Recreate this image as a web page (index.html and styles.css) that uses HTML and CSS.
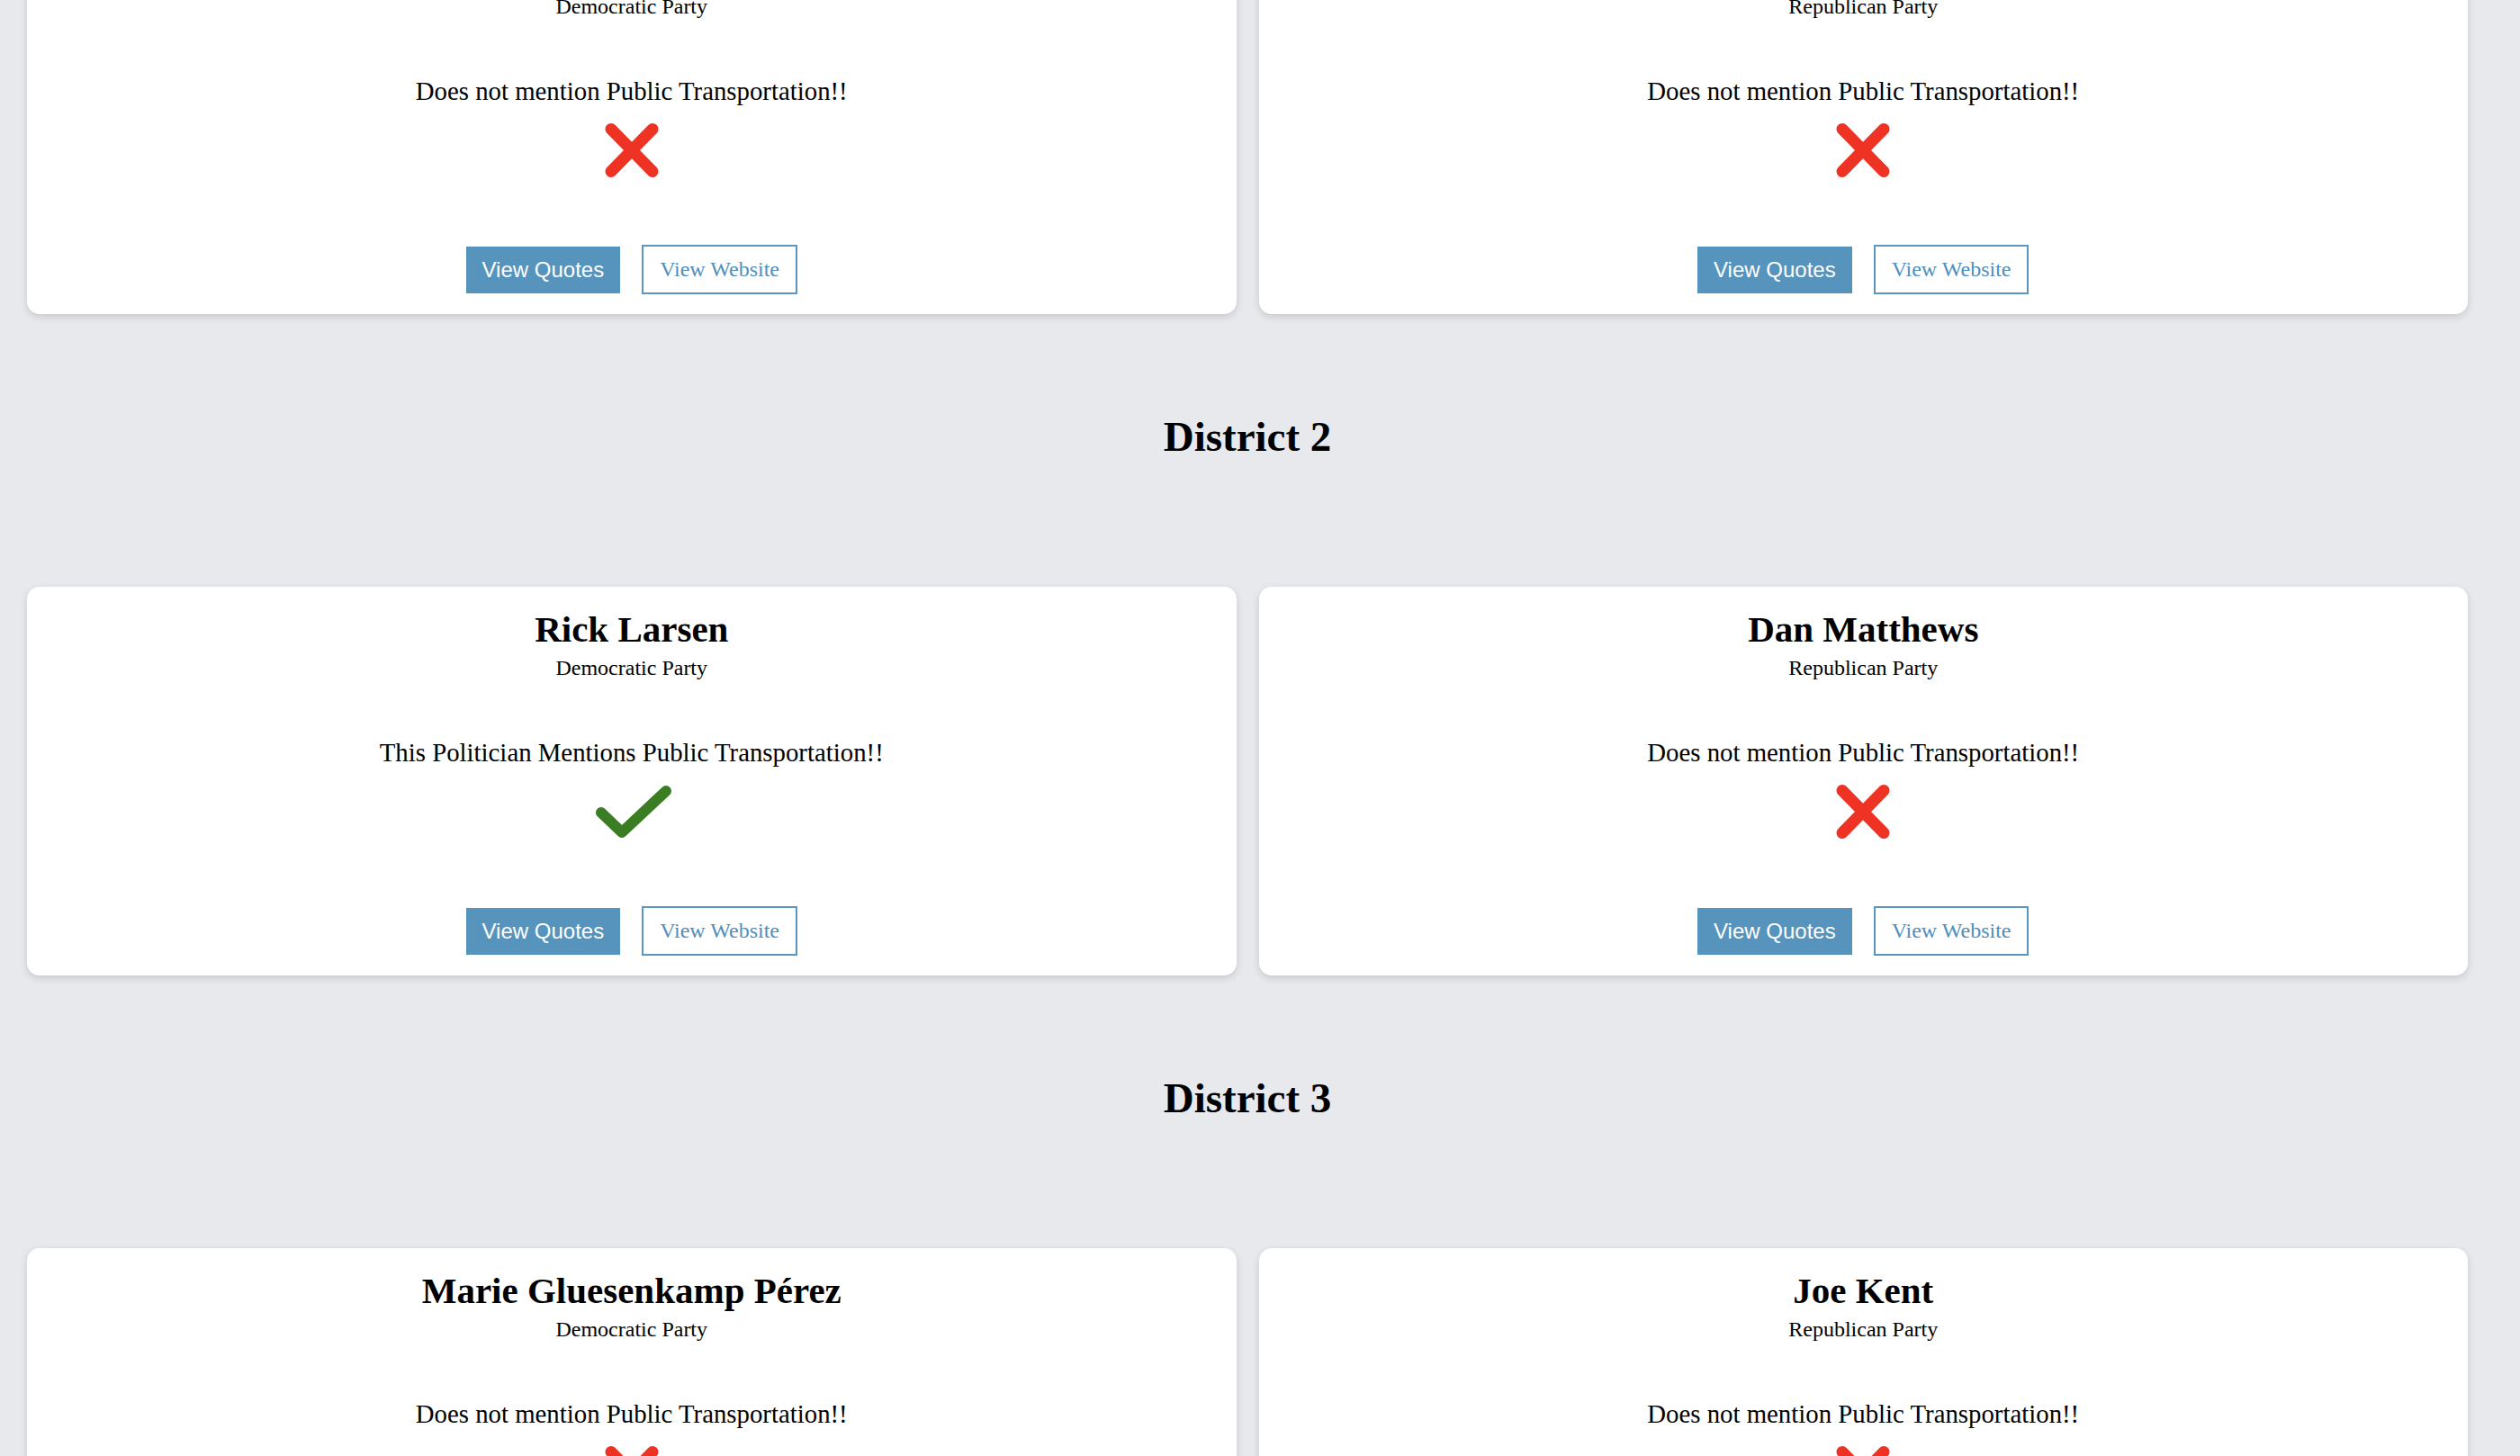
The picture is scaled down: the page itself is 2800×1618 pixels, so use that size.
FILE: index.html
```html
<!DOCTYPE html>
<html lang="en">
<head>
<meta charset="utf-8">
<title>Public Transportation Tracker</title>
<link rel="stylesheet" href="styles.css">
</head>
<body>
<main class="page">
  <section class="district">
    <h2 class="district-title">District 1</h2>
    <div class="cards">
      <article class="card">
        <h3 class="name">Suzan DelBene</h3>
        <p class="party">Democratic Party</p>
        <p class="verdict">Does not mention Public Transportation!!</p>
        <svg class="icon" width="60" height="60" viewBox="0 0 60 60"><path d="M7 6.5L53 53.5M53 6.5L7 53.5" stroke="#ee3224" stroke-width="13" stroke-linecap="round" fill="none"/></svg>
        <div class="actions"><button class="btn-quotes">View Quotes</button><a class="btn-site" href="#">View Website</a></div>
      </article>
      <article class="card">
        <h3 class="name">Derek Chartrand</h3>
        <p class="party">Republican Party</p>
        <p class="verdict">Does not mention Public Transportation!!</p>
        <svg class="icon" width="60" height="60" viewBox="0 0 60 60"><path d="M7 6.5L53 53.5M53 6.5L7 53.5" stroke="#ee3224" stroke-width="13" stroke-linecap="round" fill="none"/></svg>
        <div class="actions"><button class="btn-quotes">View Quotes</button><a class="btn-site" href="#">View Website</a></div>
      </article>
    </div>
  </section>

  <section class="district">
    <h2 class="district-title">District 2</h2>
    <div class="cards">
      <article class="card">
        <h3 class="name">Rick Larsen</h3>
        <p class="party">Democratic Party</p>
        <p class="verdict">This Politician Mentions Public Transportation!!</p>
        <svg class="icon" width="88" height="60" viewBox="0 0 88 60"><path d="M10 31L33 53L82 7" stroke="#3a7d23" stroke-width="12" stroke-linecap="round" stroke-linejoin="round" fill="none"/></svg>
        <div class="actions"><button class="btn-quotes">View Quotes</button><a class="btn-site" href="#">View Website</a></div>
      </article>
      <article class="card">
        <h3 class="name">Dan Matthews</h3>
        <p class="party">Republican Party</p>
        <p class="verdict">Does not mention Public Transportation!!</p>
        <svg class="icon" width="60" height="60" viewBox="0 0 60 60"><path d="M7 6.5L53 53.5M53 6.5L7 53.5" stroke="#ee3224" stroke-width="13" stroke-linecap="round" fill="none"/></svg>
        <div class="actions"><button class="btn-quotes">View Quotes</button><a class="btn-site" href="#">View Website</a></div>
      </article>
    </div>
  </section>

  <section class="district">
    <h2 class="district-title">District 3</h2>
    <div class="cards">
      <article class="card">
        <h3 class="name">Marie Gluesenkamp Pérez</h3>
        <p class="party">Democratic Party</p>
        <p class="verdict">Does not mention Public Transportation!!</p>
        <svg class="icon" width="60" height="60" viewBox="0 0 60 60"><path d="M7 6.5L53 53.5M53 6.5L7 53.5" stroke="#ee3224" stroke-width="13" stroke-linecap="round" fill="none"/></svg>
        <div class="actions"><button class="btn-quotes">View Quotes</button><a class="btn-site" href="#">View Website</a></div>
      </article>
      <article class="card">
        <h3 class="name">Joe Kent</h3>
        <p class="party">Republican Party</p>
        <p class="verdict">Does not mention Public Transportation!!</p>
        <svg class="icon" width="60" height="60" viewBox="0 0 60 60"><path d="M7 6.5L53 53.5M53 6.5L7 53.5" stroke="#ee3224" stroke-width="13" stroke-linecap="round" fill="none"/></svg>
        <div class="actions"><button class="btn-quotes">View Quotes</button><a class="btn-site" href="#">View Website</a></div>
      </article>
    </div>
  </section>
</main>
<script src="script.js"></script>
</body>
</html>
```

FILE: styles.css
```css
* {
  box-sizing: border-box;
}

html,
body {
  margin: 0;
  padding: 0;
  background: #e8e9ed;
}

body {
  font-family: "Liberation Serif", "Times New Roman", serif;
  color: #000;
}

.page {
  padding: 0 58px 400px 30px;
}

.district {
  padding-top: 109px;
}

.district-title {
  margin: 0 0 140px;
  font-size: 47px;
  line-height: 54px;
  font-weight: 700;
  text-align: center;
}

.cards {
  display: grid;
  grid-template-columns: 1fr 1fr;
  gap: 25px;
}

.card {
  background: #fff;
  border-radius: 14px;
  box-shadow: 0 3px 8px rgba(0, 0, 0, 0.14);
  padding: 23px 20px 22px;
  display: flex;
  flex-direction: column;
  align-items: center;
  text-align: center;
}

.name {
  margin: 0;
  font-size: 41px;
  line-height: 48px;
  font-weight: 700;
}

.party {
  margin: 5px 0 0;
  font-size: 24px;
  line-height: 28px;
}

.verdict {
  margin: 64px 0 0;
  font-size: 28.8px;
  line-height: 33px;
}

.icon {
  display: block;
  margin-top: 19px;
}

.actions {
  margin-top: 75px;
  height: 55px;
  display: flex;
  align-items: center;
  gap: 24px;
}

.btn-quotes {
  font-family: "Liberation Sans", Arial, sans-serif;
  font-size: 24px;
  line-height: 28px;
  padding: 12px 18px;
  background: #5694bd;
  color: #fff;
  border: 0;
  border-radius: 0;
}

.btn-site {
  display: block;
  font-family: "Liberation Serif", "Times New Roman", serif;
  font-size: 24px;
  line-height: 27px;
  padding: 12px 18px;
  border: 2px solid #5a96c0;
  color: #4f8ebd;
  background: #fff;
  text-decoration: none;
}
```

FILE: script.js
```js
function setScroll() {
  document.documentElement.style.scrollBehavior = "auto";
  window.scrollTo(0, 386);
}
setScroll();
window.addEventListener("load", setScroll);
```
